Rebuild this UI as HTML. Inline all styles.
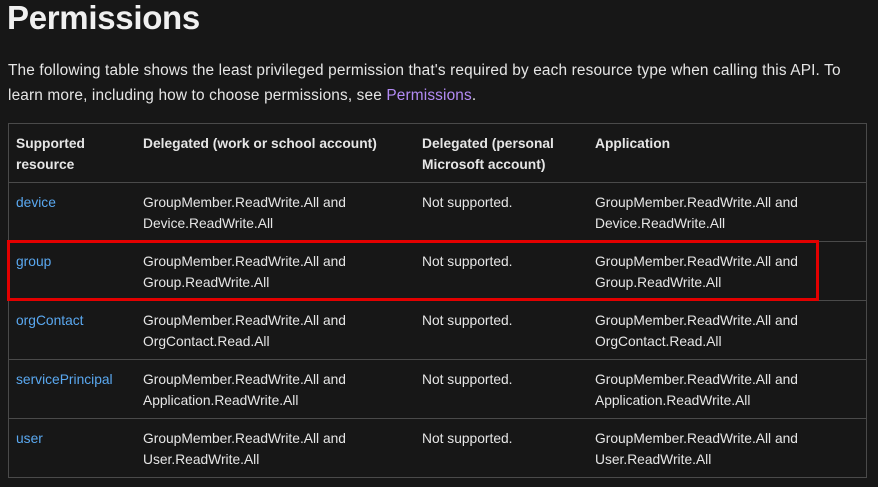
<!DOCTYPE html>
<html><head><style>
body{margin:0;background:#171717;color:#e6e6e6;font-family:"Liberation Sans",sans-serif;width:878px;height:487px;overflow:hidden;position:relative}
h1{position:absolute;left:7px;top:-1px;margin:0;font-size:33px;font-weight:bold;color:#f0f0f0;letter-spacing:-0.3px}
p{position:absolute;left:8px;top:58px;margin:0;font-size:15.4px;line-height:25px;width:848px;color:#e6e6e6;letter-spacing:0.15px}
a{color:#b38bf5;text-decoration:none}
.t{position:absolute;left:8px;top:123px;width:857px;height:353px;border:1px solid #4a4a4a}
.r{position:absolute;left:0;width:857px;height:59px;border-top:1px solid #4a4a4a;font-size:13.8px;line-height:21px}
.r div{position:absolute;top:9px}
.c1{left:7px}.c2{left:134px}.c3{left:413px}.c4{left:586px}
.h{border-top:none;top:0;font-weight:bold}
.lk{color:#5aa8f0}
.red{position:absolute;left:7px;top:240px;width:806px;height:55px;border:3px solid #e30000}
</style></head><body>
<h1>Permissions</h1>
<p>The following table shows the least privileged permission that's required by each resource type when calling this API. To learn more, including how to choose permissions, see <a>Permissions</a>.</p>
<div class="t">
<div class="r h"><div class="c1">Supported<br>resource</div><div class="c2">Delegated (work or school account)</div><div class="c3">Delegated (personal<br>Microsoft account)</div><div class="c4">Application</div></div>
<div class="r" style="top:58px"><div class="c1 lk">device</div><div class="c2">GroupMember.ReadWrite.All and<br>Device.ReadWrite.All</div><div class="c3">Not supported.</div><div class="c4">GroupMember.ReadWrite.All and<br>Device.ReadWrite.All</div></div>
<div class="r" style="top:117px"><div class="c1 lk">group</div><div class="c2">GroupMember.ReadWrite.All and<br>Group.ReadWrite.All</div><div class="c3">Not supported.</div><div class="c4">GroupMember.ReadWrite.All and<br>Group.ReadWrite.All</div></div>
<div class="r" style="top:176px"><div class="c1 lk">orgContact</div><div class="c2">GroupMember.ReadWrite.All and<br>OrgContact.Read.All</div><div class="c3">Not supported.</div><div class="c4">GroupMember.ReadWrite.All and<br>OrgContact.Read.All</div></div>
<div class="r" style="top:235px"><div class="c1 lk">servicePrincipal</div><div class="c2">GroupMember.ReadWrite.All and<br>Application.ReadWrite.All</div><div class="c3">Not supported.</div><div class="c4">GroupMember.ReadWrite.All and<br>Application.ReadWrite.All</div></div>
<div class="r" style="top:294px"><div class="c1 lk">user</div><div class="c2">GroupMember.ReadWrite.All and<br>User.ReadWrite.All</div><div class="c3">Not supported.</div><div class="c4">GroupMember.ReadWrite.All and<br>User.ReadWrite.All</div></div>
</div>
<div class="red"></div>
</body></html>
